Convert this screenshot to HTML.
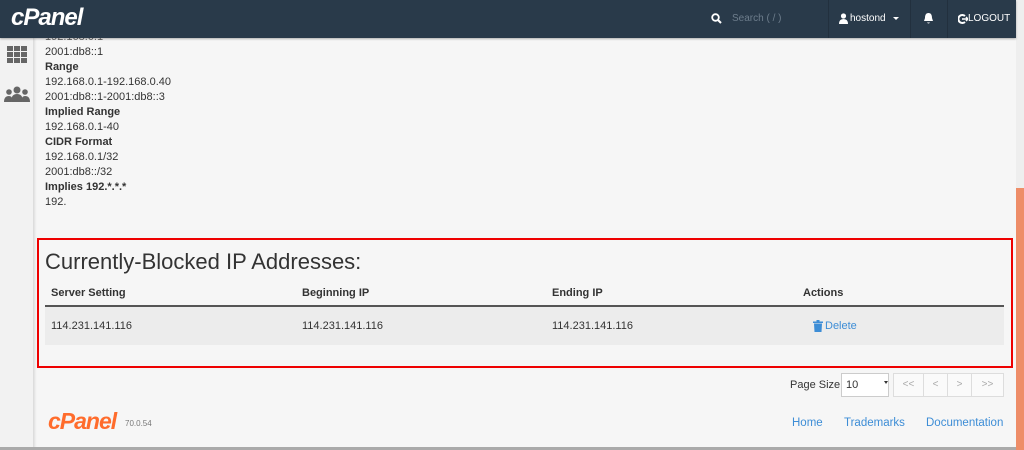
<!DOCTYPE html>
<html><head><style>
*{margin:0;padding:0;box-sizing:border-box}
body{width:1024px;height:450px;overflow:hidden;background:#f6f6f6;font-family:"Liberation Sans",sans-serif;color:#333;position:relative}
.top{position:absolute;left:0;top:0;width:1016px;height:38px;background:#293a4a;box-shadow:0 1px 2px rgba(0,0,0,.3);z-index:3}
.logo{position:absolute;left:11px;top:4px;color:#fff;font-size:24px;font-weight:bold;font-style:italic;letter-spacing:-1px}
.tt{position:absolute;top:13px;color:#fff;font-size:10px}
.sep{position:absolute;top:0;width:1px;height:38px;background:#22303e}
.side{position:absolute;left:0;top:38px;width:34px;height:412px;background:#f2f2f2;border-right:1px solid #ddd;box-shadow:1px 0 2px #ddd}
.sb{position:absolute;left:1016px;top:0;width:8px;height:450px;background:#eee}
.thumb{position:absolute;left:1016px;top:188px;width:8px;height:262px;background:#ee8d68}
.c{position:absolute;left:45px;font-size:11px;line-height:15px}
.b{font-weight:bold}
.box{position:absolute;left:37px;top:238px;width:976px;height:130px;border:2px solid #e00}
h2{position:absolute;left:45px;top:249px;font-weight:normal;font-size:22px;color:#333}
.th{position:absolute;top:287px;font-size:11px;font-weight:bold}
.line{position:absolute;left:45px;top:305px;width:959px;height:2px;background:#555}
.row{position:absolute;left:45px;top:307px;width:959px;height:38px;background:#ececec}
.td{position:absolute;top:320px;font-size:11px}
.btn{position:absolute;top:373px;height:24px;border:1px solid #ddd;background:#fafafa;color:#aaa;font-size:10px;text-align:center;line-height:22px}
.f{position:absolute;top:417px;font-size:11.5px;color:#3d8dd6}
</style></head><body>
<div class="c" style="top:30px;color:#666">192.168.0.1</div>
<div class="top">
<div class="logo">cPanel</div>
<svg style="position:absolute;left:711px;top:13px" width="11" height="11" viewBox="0 0 11 11"><circle cx="4.5" cy="4.5" r="3.3" stroke="#fff" stroke-width="1.8" fill="none"/><path d="M7 7L10 10" stroke="#fff" stroke-width="2"/></svg>
<div class="tt" style="left:732px;color:#6d7d8c">Search ( / )</div>
<div class="sep" style="left:828px"></div>
<svg style="position:absolute;left:839px;top:13px" width="9" height="11" viewBox="0 0 9 11"><circle cx="4.5" cy="3" r="2.6" fill="#fff"/><path d="M0 11Q0 6 4.5 6Q9 6 9 11Z" fill="#fff"/></svg>
<div class="tt" style="left:850px">hostond</div>
<div style="position:absolute;left:893px;top:17px;border:3px solid transparent;border-top-color:#fff"></div>
<div class="sep" style="left:910px"></div>
<svg style="position:absolute;left:923px;top:12px" width="11" height="13" viewBox="0 0 11 13"><path d="M5.5 1C3 1 2 3 2 6L1 9H10L9 6C9 3 8 1 5.5 1Z M4 10.5Q5.5 12.5 7 10.5Z" fill="#fff"/></svg>
<div class="sep" style="left:947px"></div>
<svg style="position:absolute;left:958px;top:14px" width="10" height="10" viewBox="0 0 10 10"><path d="M7 2A4 4 0 1 0 7 8" stroke="#fff" stroke-width="2" fill="none"/><path d="M4 5H10M8 3L10 5L8 7" stroke="#fff" stroke-width="1.5" fill="none"/></svg>
<div class="tt" style="left:968px">LOGOUT</div>
</div>
<div class="side">
<svg style="position:absolute;left:7px;top:8px" width="21" height="18"><g fill="#666"><rect x="0" y="0" width="6" height="5"/><rect x="7" y="0" width="6" height="5"/><rect x="14" y="0" width="6" height="5"/><rect x="0" y="6" width="6" height="5"/><rect x="7" y="6" width="6" height="5"/><rect x="14" y="6" width="6" height="5"/><rect x="0" y="12" width="6" height="5"/><rect x="7" y="12" width="6" height="5"/><rect x="14" y="12" width="6" height="5"/></g></svg>
<svg style="position:absolute;left:4px;top:48px" width="26" height="16"><g fill="#666"><circle cx="13" cy="4" r="3.5"/><circle cx="5" cy="6" r="2.8"/><circle cx="21" cy="6" r="2.8"/><path d="M7 16Q7 8 13 8Q19 8 19 16Z"/><path d="M0 16Q0 10 5 10Q8 10 8 13L7 16Z"/><path d="M26 16Q26 10 21 10Q18 10 18 13L19 16Z"/></g></svg>
</div>
<div class="c" style="top:45px">2001:db8::1<br><span class="b">Range</span><br>192.168.0.1-192.168.0.40<br>2001:db8::1-2001:db8::3<br><span class="b">Implied Range</span><br>192.168.0.1-40<br><span class="b">CIDR Format</span><br>192.168.0.1/32<br>2001:db8::/32<br><span class="b">Implies 192.*.*.*</span><br>192.</div>
<div class="box"></div>
<h2>Currently-Blocked IP Addresses:</h2>
<div class="th" style="left:51px">Server Setting</div>
<div class="th" style="left:302px">Beginning IP</div>
<div class="th" style="left:552px">Ending IP</div>
<div class="th" style="left:803px">Actions</div>
<div class="line"></div><div class="row"></div>
<div class="td" style="left:51px">114.231.141.116</div>
<div class="td" style="left:302px">114.231.141.116</div>
<div class="td" style="left:552px">114.231.141.116</div>
<svg style="position:absolute;left:813px;top:320px" width="10" height="12" viewBox="0 0 10 12"><path d="M0 1.5H10V3H0Z M3.5 0H6.5V1.5H3.5Z M1 3.5H9L8.5 12H1.5Z" fill="#3d8dd6"/></svg>
<div class="td" style="left:825px;color:#3d8dd6">Delete</div>
<div style="position:absolute;left:790px;top:379px;font-size:11px">Page Size</div>
<div style="position:absolute;left:841px;top:373px;width:48px;height:24px;border:1px solid #ccc;background:#fff;font-size:11px;padding:5px 4px">10</div>
<div style="position:absolute;left:884px;top:381px;border:2px solid transparent;border-top:3px solid #333"></div>
<div class="btn" style="left:893px;width:31px">&lt;&lt;</div>
<div class="btn" style="left:923px;width:25px">&lt;</div>
<div class="btn" style="left:947px;width:25px">&gt;</div>
<div class="btn" style="left:971px;width:33px">&gt;&gt;</div>
<div style="position:absolute;left:48px;top:408px;color:#ff6c2c;font-size:23px;font-weight:bold;font-style:italic;letter-spacing:-1px">cPanel</div>
<div style="position:absolute;left:125px;top:419px;font-size:8px;color:#777">70.0.54</div>
<div class="f" style="left:792px">Home</div>
<div class="f" style="left:844px">Trademarks</div>
<div class="f" style="left:926px">Documentation</div>
<div style="position:absolute;left:0;top:447px;width:1016px;height:3px;background:#aaa"></div>
<div class="sb"></div><div class="thumb"></div>
</body></html>
